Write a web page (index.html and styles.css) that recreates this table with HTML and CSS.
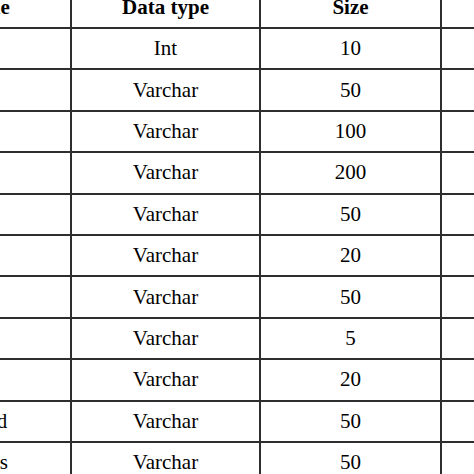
FILE: index.html
```html
<!DOCTYPE html>
<html>
<head>
<meta charset="utf-8">
<link rel="stylesheet" href="styles.css">
</head>
<body>
<div class="frame">
<table class="spec">
  <colgroup>
    <col class="c-name"><col class="c-type"><col class="c-size"><col class="c-note">
  </colgroup>
  <thead>
    <tr><th>Field name</th><th>Data type</th><th>Size</th><th></th></tr>
  </thead>
  <tbody>
    <tr><td>User_id</td><td>Int</td><td>10</td><td></td></tr>
    <tr><td>Name</td><td>Varchar</td><td>50</td><td></td></tr>
    <tr><td>Address</td><td>Varchar</td><td>100</td><td></td></tr>
    <tr><td>Details</td><td>Varchar</td><td>200</td><td></td></tr>
    <tr><td>Email</td><td>Varchar</td><td>50</td><td></td></tr>
    <tr><td>Phone</td><td>Varchar</td><td>20</td><td></td></tr>
    <tr><td>City</td><td>Varchar</td><td>50</td><td></td></tr>
    <tr><td>Gender</td><td>Varchar</td><td>5</td><td></td></tr>
    <tr><td>Mobile</td><td>Varchar</td><td>20</td><td></td></tr>
    <tr><td>Authorized</td><td>Varchar</td><td>50</td><td></td></tr>
    <tr><td>Documents</td><td>Varchar</td><td>50</td><td></td></tr>
  </tbody>
</table>
</div>
</body>
</html>
```
FILE: styles.css
```css
html, body {
  margin: 0;
  padding: 0;
  background: #ffffff;
}
.frame {
  width: 474px;
  height: 474px;
  overflow: hidden;
}
.spec {
  border-collapse: collapse;
  table-layout: fixed;
  width: 774px;
  margin-left: -152px;
  margin-top: -14.4px;
  font-family: "Liberation Serif", "Times New Roman", serif;
  font-size: 21px;
  color: #000;
}
.c-name { width: 222px; }
.c-type { width: 189px; }
.c-size { width: 181px; }
.c-note { width: 182px; }
.spec th, .spec td {
  border: 2px solid #2e2e2e;
  height: 39.4px;
  padding: 0;
  text-align: center;
  vertical-align: middle;
  white-space: nowrap;
}
.spec th {
  font-weight: bold;
}
.spec td {
  font-weight: normal;
}
```
